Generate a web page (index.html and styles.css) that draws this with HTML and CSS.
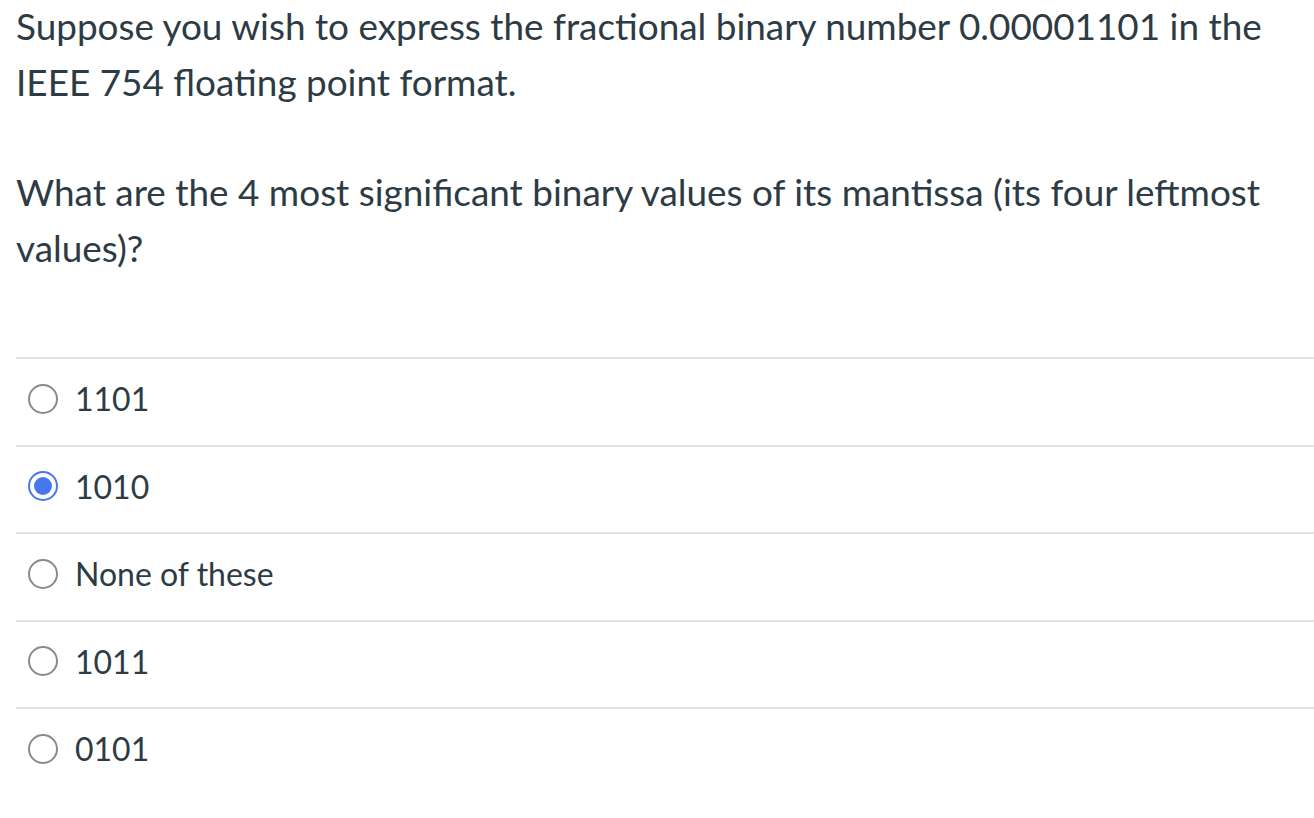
FILE: index.html
```html
<!DOCTYPE html>
<html>
<head>
<meta charset="utf-8">
<link rel="stylesheet" href="styles.css">
</head>
<body>
<div class="question">
  <div class="question-text">
    <p>Suppose you wish to express the fractional binary number 0.00001101 in the IEEE 754 floating point format.</p>
    <p>What are the 4 most significant binary values of its mantissa (its four leftmost values)?</p>
  </div>
  <div class="answers">
    <label class="answer"><span class="radio"></span><span class="answer-text">1101</span></label>
    <label class="answer"><span class="radio checked"></span><span class="answer-text">1010</span></label>
    <label class="answer"><span class="radio"></span><span class="answer-text">None of these</span></label>
    <label class="answer"><span class="radio"></span><span class="answer-text">1011</span></label>
    <label class="answer"><span class="radio"></span><span class="answer-text">0101</span></label>
  </div>
</div>
</body>
</html>
```

FILE: styles.css
```css
html, body {
  margin: 0;
  padding: 0;
  background: #ffffff;
}
body {
  font-family: Lato, "Noto Sans", sans-serif;
  color: #2d3b45;
}
.question {
  padding-left: 16px;
}
.question-text {
  font-size: 36.9px;
  line-height: 56px;
  padding-right: 30px;
}
.question-text p {
  margin: 0 0 54px 0;
}
.question-text p:first-child {
  margin-top: -2px;
}
.question-text p:last-child {
  margin-bottom: 0;
}
.answers {
  margin-top: 81px;
}
.answer {
  display: flex;
  align-items: center;
  height: 79.5px;
  padding-bottom: 6px;
  border-top: 2px solid #e1e2e3;
  padding-left: 12px;
  gap: 17px;
  font-size: 32px;
}
.radio {
  box-sizing: border-box;
  width: 30px;
  height: 30px;
  border-radius: 50%;
  border: 2px solid #8a8a8a;
  flex: none;
  position: relative;
}
.radio.checked {
  border: 2px solid #4876ee;
}
.radio.checked::after {
  content: "";
  position: absolute;
  left: 4px;
  top: 4px;
  width: 18px;
  height: 18px;
  border-radius: 50%;
  background: #4876ee;
}
```
